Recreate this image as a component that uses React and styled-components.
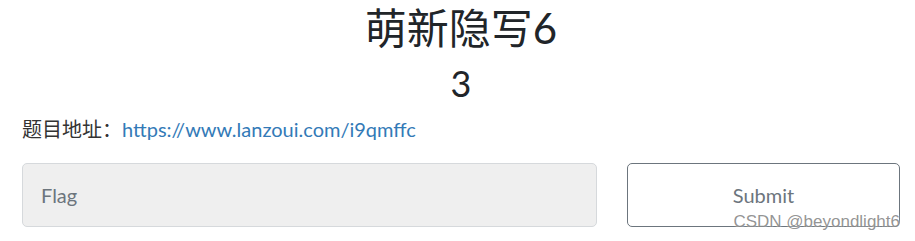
import React from 'react'
import styled, { createGlobalStyle } from 'styled-components'

const GlobalStyle = createGlobalStyle`
  html, body {
    margin: 0;
    padding: 0;
    background: #fff;
  }
  body {
    font-family: Lato, "Noto Sans CJK SC", sans-serif;
    color: #212529;
  }
`

const Modal = styled.div`
  position: relative;
  width: 915px;
  height: 241px;
  overflow: hidden;
  box-sizing: border-box;
  padding: 0 15px 0 22px;
`

const Title = styled.h2`
  margin: 0;
  padding-top: 2px;
  text-align: center;
  font-weight: 400;
  font-size: 42px;
  line-height: 52px;
  color: #212529;
`

const Points = styled.h3`
  margin: 0;
  padding-top: 8px;
  text-align: center;
  font-weight: 400;
  font-size: 36px;
  line-height: 42px;
  color: #212529;
`

const Desc = styled.p`
  margin: 11px 0 0;
  font-size: 20px;
  line-height: 28px;
  color: #333;
`

const Link = styled.a`
  color: #337ab7;
  text-decoration: none;
`

const Form = styled.form`
  display: flex;
  gap: 30px;
  margin-top: 20px;
`

const FlagInput = styled.input`
  flex: 0 0 575px;
  height: 64px;
  box-sizing: border-box;
  padding: 0 18px;
  border: 1px solid #d6d9dc;
  border-radius: 5px;
  background: #efefef;
  font-family: Lato, sans-serif;
  font-size: 20px;
  color: #495057;
  outline: none;
  &::placeholder {
    color: #6c757d;
  }
`

const SubmitButton = styled.button`
  flex: 0 0 273px;
  height: 64px;
  box-sizing: border-box;
  border: 1px solid #6c757d;
  border-radius: 5px;
  background: #fff;
  font-family: Lato, sans-serif;
  font-size: 20px;
  color: #6c757d;
  cursor: pointer;
`

const Watermark = styled.span`
  position: absolute;
  right: 15px;
  bottom: 9px;
  font-family: "Liberation Sans", Arial, sans-serif;
  font-size: 17px;
  color: rgba(120, 120, 120, 0.8);
  text-shadow: 0 0 2px #fff;
  pointer-events: none;
`

export default function App() {
  return (
    <>
      <GlobalStyle />
      <Modal>
        <Title>萌新隐写6</Title>
        <Points>3</Points>
        <Desc>
          题目地址：<Link href="#">https://www.lanzoui.com/i9qmffc</Link>
        </Desc>
        <Form onSubmit={e => e.preventDefault()}>
          <FlagInput placeholder="Flag" />
          <SubmitButton type="submit">Submit</SubmitButton>
        </Form>
        <Watermark>CSDN @beyondlight6</Watermark>
      </Modal>
    </>
  )
}
